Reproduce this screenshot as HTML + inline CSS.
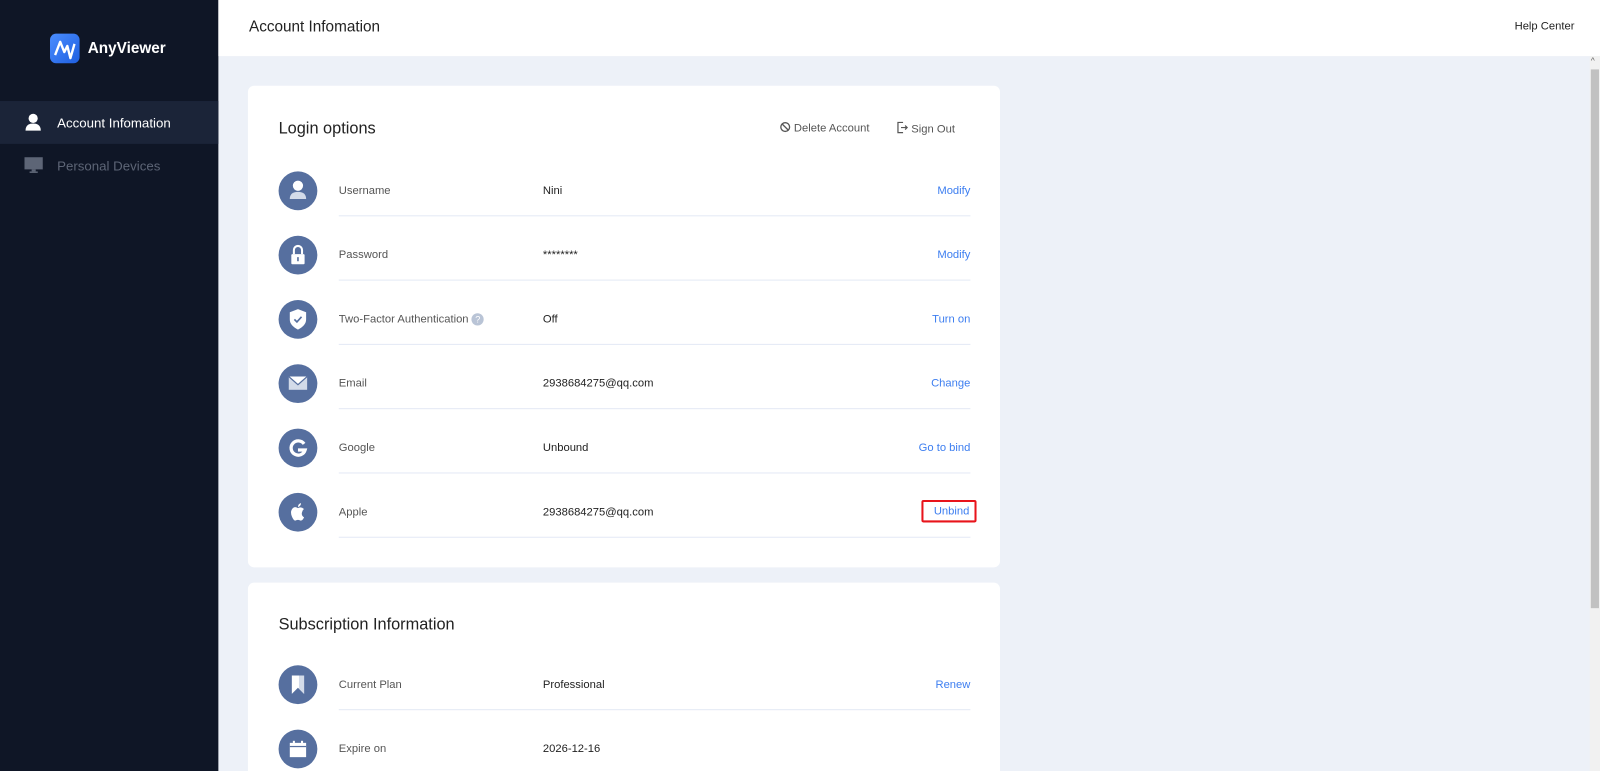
<!DOCTYPE html>
<html style="overflow:hidden;width:1600px;height:771px"><head><meta charset="utf-8"><style>
*{margin:0;padding:0;box-sizing:border-box}
body{width:1600px;height:771px;overflow:hidden;font-family:"Liberation Sans",sans-serif;background:#edf1f8;position:relative}
.clip{position:absolute;left:0;top:0;width:1600px;height:771px;overflow:hidden}
.wrap{position:absolute;left:0;top:0;width:1568px;height:756px;overflow:hidden;transform:scale(1.020408);transform-origin:0 0;background:#edf1f8}
.side{position:absolute;left:0;top:0;width:214px;height:756px;background:#0f1626}
.logo{position:absolute;left:49px;top:33px;width:29px;height:29px;border-radius:6px;background:linear-gradient(135deg,#4a8dff,#1f5fe0)}
.brand{position:absolute;left:86px;top:39px;color:#fff;font-weight:bold;font-size:15px}
.nav{position:absolute;left:0;width:214px;height:42px;font-size:13px}
.nav span{position:absolute;left:56px;top:14px}
.hdr{position:absolute;left:214px;top:0;width:1354px;height:55px;background:#fff}
.hdr .t{position:absolute;left:30px;top:18px;font-size:15px;color:#222}
.hdr .h{position:absolute;right:25px;top:20px;font-size:11px;color:#222}
.card{position:absolute;left:243px;width:737px;background:#fff;border-radius:6px}
.title{position:absolute;left:30px;font-size:16px;color:#222}
.row{position:absolute;left:30px;width:678px;height:63px}
.ic{position:absolute;left:0;top:-19px;width:38px;height:38px;border-radius:50%;background:#566f9f}
.ic svg{position:absolute;left:0;top:0}
.lb{position:absolute;left:59px;top:-6px;font-size:11px;color:#555}
.vl{position:absolute;left:259px;top:-6px;font-size:11px;color:#222}
.ac{position:absolute;right:0;top:-6px;font-size:11px;color:#3d7ef0}
.ln{position:absolute;left:59px;right:0;top:24px;height:1px;background:#e3e9f5}
.sb{position:absolute;left:1558px;top:55px;width:10px;height:701px;background:#f1f1f1}
.th{position:absolute;left:1559px;top:68px;width:8px;height:528px;background:#c1c1c1}
</style></head><body><div class="clip"><div class="wrap">
<div class="side">
<div class="logo"><svg width="29" height="29" viewBox="0 0 29 29"><path d="M5 21 L10 8 L14 18 L17 12 L20 24 L24 10" fill="none" stroke="#fff" stroke-width="2.3" stroke-linejoin="round"/></svg></div>
<div class="brand">AnyViewer</div>
<div class="nav" style="top:99px;background:#1b2438;color:#fff"><svg style="position:absolute;left:24px;top:12px" width="17" height="18" viewBox="0 0 17 18"><circle cx="8.5" cy="5" r="4.5" fill="#fff"/><path d="M1 17 Q1 10 8.5 10 Q16 10 16 17Z" fill="#fff"/></svg><span>Account Infomation</span></div>
<div class="nav" style="top:141px;color:#5d6576"><svg style="position:absolute;left:24px;top:13px" width="18" height="16" viewBox="0 0 18 16"><rect x="0" y="0" width="18" height="12" fill="#5d6576"/><rect x="7" y="12" width="4" height="2" fill="#5d6576"/><rect x="5" y="14" width="8" height="1.5" fill="#5d6576"/></svg><span>Personal Devices</span></div>
</div>
<div class="hdr"><div class="t">Account Infomation</div><div class="h">Help Center</div></div>
<div class="sb"></div><div class="th"></div>
<div style="position:absolute;left:1559px;top:55px;font-size:8px;color:#555">^</div>
<div class="card" style="top:84px;height:472px">
<div class="title" style="top:34px">Login options</div>
<div style="position:absolute;left:521px;top:35px;font-size:11px;color:#555"><svg width="11" height="11" viewBox="0 0 11 11" style="vertical-align:-1px"><circle cx="5.5" cy="5.5" r="4.3" fill="none" stroke="#555" stroke-width="1.3"/><path d="M2.5 2.5 L8.5 8.5" stroke="#555" stroke-width="1.3"/></svg> Delete Account</div>
<div style="position:absolute;left:636px;top:35px;font-size:11px;color:#555"><svg width="11" height="12" viewBox="0 0 11 12" style="vertical-align:-1px"><path d="M6 1 H1 V11 H6" fill="none" stroke="#555" stroke-width="1.2"/><path d="M4 6 H10 M8 4 L10 6 L8 8" fill="none" stroke="#555" stroke-width="1.2"/></svg> Sign Out</div>
<div class="row" style="top:103px"><div class="ic"><svg width="38" height="38"><circle cx="19" cy="14" r="5" fill="#fff"/><path d="M11 27 Q11 20 19 20 Q27 20 27 27Z" fill="#d3dbe9"/></svg></div><div class="lb">Username</div><div class="vl">Nini</div><div class="ac">Modify</div><div class="ln"></div></div>
<div class="row" style="top:166px"><div class="ic"><svg width="38" height="38"><path d="M15 18 V14 A4 4 0 0 1 23 14 V18" fill="none" stroke="#fff" stroke-width="2"/><rect x="12.5" y="18" width="13" height="10" rx="1" fill="#fff"/><rect x="18.2" y="21" width="1.6" height="4" fill="#566f9f"/></svg></div><div class="lb">Password</div><div class="vl">********</div><div class="ac">Modify</div><div class="ln"></div></div>
<div class="row" style="top:229px"><div class="ic"><svg width="38" height="38"><path d="M19 9 L27 12 V19 Q27 25 19 29 Q11 25 11 19 V12Z" fill="#fff"/><path d="M15.5 19 L18 21.5 L22.5 16.5" fill="none" stroke="#566f9f" stroke-width="1.6"/></svg></div><div class="lb">Two-Factor Authentication <span style="display:inline-block;width:12px;height:12px;border-radius:50%;background:#b9c4d6;color:#fff;font-size:9px;text-align:center;line-height:12px;vertical-align:0">?</span></div><div class="vl">Off</div><div class="ac">Turn on</div><div class="ln"></div></div>
<div class="row" style="top:292px"><div class="ic"><svg width="38" height="38"><rect x="10" y="12" width="18" height="13" fill="#d3dbe9"/><path d="M10 12 L19 20 L28 12" fill="#fff" stroke="#566f9f" stroke-width="1.2"/></svg></div><div class="lb">Email</div><div class="vl">2938684275@qq.com</div><div class="ac">Change</div><div class="ln"></div></div>
<div class="row" style="top:355px"><div class="ic"><svg width="38" height="38"><path d="M25 15 A7 7 0 1 0 26 21 H19" fill="none" stroke="#fff" stroke-width="3.2"/></svg></div><div class="lb">Google</div><div class="vl">Unbound</div><div class="ac">Go to bind</div><div class="ln"></div></div>
<div class="row" style="top:418px"><div class="ic"><svg width="38" height="38"><path d="M19 15 Q16 13 14 15 Q11 18 13 23 Q15 28 17 27 Q19 26 21 27 Q23 28 25 24 Q22 22 23 19 Q24 16 25 16 Q22 13 19 15Z" fill="#fff"/><path d="M19 14 Q19 11 22 10 Q22 13 19 14Z" fill="#fff"/></svg></div><div class="lb">Apple</div><div class="vl">2938684275@qq.com</div><div class="ac" style="right:-6px;top:-12px;border:2px solid #e8141b;border-radius:2px;padding:3px 5px 3px 10px">Unbind</div><div class="ln"></div></div>
</div>
<div class="card" style="top:571px;height:200px">
<div class="title" style="top:33px">Subscription Information</div>
<div class="row" style="top:100px"><div class="ic"><svg width="38" height="38"><path d="M13 10 H25 V28 L19 22 L13 28Z" fill="#fff"/><path d="M20 10 H25 V28 L20 23Z" fill="#d3dbe9"/></svg></div><div class="lb">Current Plan</div><div class="vl">Professional</div><div class="ac">Renew</div><div class="ln"></div></div>
<div class="row" style="top:163px"><div class="ic"><svg width="38" height="38"><rect x="11" y="13" width="16" height="14" fill="#fff"/><rect x="11" y="16" width="16" height="1.2" fill="#566f9f"/><rect x="14" y="11" width="2" height="4" fill="#fff"/><rect x="22" y="11" width="2" height="4" fill="#fff"/></svg></div><div class="lb">Expire on</div><div class="vl">2026-12-16</div></div>
</div>
</div></div></body></html>
